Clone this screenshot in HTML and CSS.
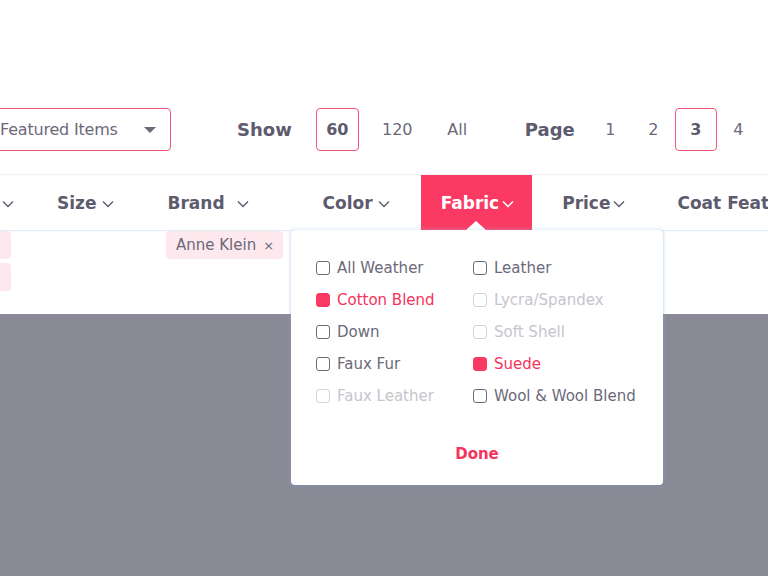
FILE: index.html
```html
<!DOCTYPE html>
<html>
<head>
<meta charset="utf-8">
<link rel="stylesheet" href="styles.css">
</head>
<body>
<div class="page">
  <div class="header">
    <div class="toolbar">
      <div class="sort">
        <span class="sort-text">Featured Items</span>
        <span class="caret"></span>
      </div>
      <span class="label label-show">Show</span>
      <div class="group group-show">
        <span class="opt boxed">60</span>
        <span class="opt">120</span>
        <span class="opt">All</span>
      </div>
      <span class="label label-page">Page</span>
      <div class="group group-page">
        <span class="num">1</span>
        <span class="num">2</span>
        <span class="num boxed">3</span>
        <span class="num">4</span>
      </div>
    </div>
    <div class="filters">
      <div class="filter f-prev"><svg class="chev" viewBox="0 0 12 8"><path d="M1 1.5l5 5 5-5"/></svg></div>
      <div class="filter f-size">Size<svg class="chev" viewBox="0 0 12 8"><path d="M1 1.5l5 5 5-5"/></svg></div>
      <div class="filter f-brand">Brand<svg class="chev chev-wide" viewBox="0 0 12 8"><path d="M1 1.5l5 5 5-5"/></svg></div>
      <div class="filter f-color">Color<svg class="chev" viewBox="0 0 12 8"><path d="M1 1.5l5 5 5-5"/></svg></div>
      <div class="filter f-fabric active">Fabric<svg class="chev chev-tight" viewBox="0 0 12 8"><path d="M1 1.5l5 5 5-5"/></svg><span class="notch"></span></div>
      <div class="filter f-price">Price<svg class="chev chev-tight" viewBox="0 0 12 8"><path d="M1 1.5l5 5 5-5"/></svg></div>
      <div class="filter f-coat">Coat Features</div>
    </div>
    <div class="tags">
      <div class="tag-col">
        <span class="tag tag-stub"></span>
        <span class="tag tag-stub"></span>
      </div>
      <span class="tag tag-brand">Anne Klein <span class="x">×</span></span>
    </div>
  </div>
  <div class="overlay"></div>

  <div class="dropdown">
    <div class="grid">
      <label class="item"><span class="box"></span>All Weather</label>
      <label class="item"><span class="box"></span>Leather</label>
      <label class="item checked"><span class="box"></span>Cotton Blend</label>
      <label class="item disabled"><span class="box"></span>Lycra/Spandex</label>
      <label class="item"><span class="box"></span>Down</label>
      <label class="item disabled"><span class="box"></span>Soft Shell</label>
      <label class="item"><span class="box"></span>Faux Fur</label>
      <label class="item checked"><span class="box"></span>Suede</label>
      <label class="item disabled"><span class="box"></span>Faux Leather</label>
      <label class="item"><span class="box"></span>Wool &amp; Wool Blend</label>
    </div>
    <div class="done">Done</div>
  </div>
</div>
</body>
</html>
```

FILE: styles.css
```css
* { box-sizing: border-box; }
html, body { margin: 0; padding: 0; }
body {
  width: 768px;
  height: 576px;
  overflow: hidden;
  font-family: "DejaVu Sans", "Noto Sans", sans-serif;
  color: #6b697a;
  background: #8a8996;
}
.page {
  position: relative;
  width: 768px;
  height: 576px;
  display: flex;
  flex-direction: column;
}
.header {
  background: #ffffff;
  height: 314px;
  display: flex;
  flex-direction: column;
}
.overlay {
  flex: 1;
  background: #8a8996;
}

/* toolbar */
.toolbar {
  margin-top: 108px;
  height: 43px;
  display: flex;
  align-items: center;
}
.sort {
  margin-left: -29px;
  width: 200px;
  height: 43px;
  border: 1.5px solid #f2557a;
  border-radius: 4px;
  display: flex;
  align-items: center;
  padding-left: 28px;
  font-size: 16px;
  color: #6b697a;
}
.sort-text { flex: 1; letter-spacing: -0.2px; }
.caret {
  width: 0;
  height: 0;
  border-left: 6px solid transparent;
  border-right: 6px solid transparent;
  border-top: 6px solid #6b697a;
  margin-right: 14px;
  margin-top: 1px;
}
.label {
  font-weight: bold;
  font-size: 18px;
  color: #5d5b6d;
}
.label-show { margin-left: 66px; }
.label-page { margin-left: 46px; }
.group { display: flex; align-items: center; }
.group-show { margin-left: 24px; gap: 17px; }
.group-page { margin-left: 14px; }
.opt, .num {
  width: 43px;
  height: 43px;
  display: flex;
  align-items: center;
  justify-content: center;
  font-size: 16px;
  color: #6b697a;
  border: 1.5px solid transparent;
  border-radius: 4px;
}
.num.boxed { width: 42px; }
.boxed {
  border-color: #f2557a;
  font-weight: bold;
  color: #5d5b6d;
}

/* filter bar */
.filters {
  margin-top: 23px;
  height: 56px;
  border-top: 1px solid #f1f1f5;
  box-shadow: 0 1px 1px rgba(190, 215, 240, 0.45);
  display: flex;
  align-items: stretch;
  white-space: nowrap;
  overflow: hidden;
}
.filter {
  position: relative;
  display: flex;
  align-items: center;
  font-weight: bold;
  font-size: 17px;
  color: #5d5b6d;
  flex: none;
}
.chev {
  width: 12px;
  height: 8px;
  margin-left: 5px;
  margin-top: 2px;
  fill: none;
  stroke: #5d5b6d;
  stroke-width: 1.4;
}
.chev-wide { margin-left: 12px; }
.chev-tight { margin-left: 3px; }
.f-prev .chev { margin-left: 2px; }
.f-size { margin-left: 43px; }
.f-brand { margin-left: 54px; }
.f-color { margin-left: 74px; }
.f-fabric { margin-left: 31px; }
.f-price { margin-left: 30px; }
.f-coat { margin-left: 52px; }
.filter.active {
  background: #fb3a63;
  color: #ffffff;
  padding: 0 18px 0 20px;
}
.filter.active .chev { stroke: #ffffff; }
.notch {
  position: absolute;
  left: 50%;
  bottom: 0;
  margin-left: -10px;
  width: 0;
  height: 0;
  border-left: 10px solid transparent;
  border-right: 10px solid transparent;
  border-bottom: 9px solid #ffffff;
}

/* tags */
.tags {
  display: flex;
  align-items: flex-start;
  padding-top: 1px;
}
.tag-col {
  display: flex;
  flex-direction: column;
  gap: 4px;
  margin-left: -40px;
}
.tag {
  background: #fde8ed;
  border-radius: 4px;
  height: 28px;
  display: flex;
  align-items: center;
}
.tag-stub { width: 51px; height: 28px; }
.tag-brand {
  margin-left: 155px;
  padding: 0 9px 0 10px;
  font-size: 15px;
  color: #6b697a;
}
.x { font-size: 13px; margin-left: 7px; }

/* dropdown */
.dropdown {
  position: absolute;
  left: 291px;
  top: 230px;
  width: 372px;
  height: 255px;
  background: #ffffff;
  border-radius: 4px;
  box-shadow: 0 0 5px rgba(160, 200, 240, 0.45), 0 1px 2px rgba(90, 90, 110, 0.35);
  padding: 22px 0 0 25px;
}
.grid {
  display: grid;
  grid-template-columns: 157px 170px;
  grid-auto-rows: 32px;
}
.item {
  display: flex;
  align-items: center;
  font-size: 15px;
  color: #6b697a;
  white-space: nowrap;
}
.box {
  width: 14px;
  height: 14px;
  border: 1.5px solid #6b697a;
  border-radius: 3px;
  margin-right: 7px;
  flex: none;
}
.item.checked { color: #f5335c; }
.item.checked .box { background: #fb3a63; border-color: #fb3a63; }
.item.disabled { color: #c6c5cc; }
.item.disabled .box { border-color: #d3d2d8; }
.done {
  margin: 32px 0 0 -25px;
  height: 20px;
  line-height: 20px;
  text-align: center;
  font-weight: bold;
  font-size: 15px;
  color: #f5335c;
}
```
